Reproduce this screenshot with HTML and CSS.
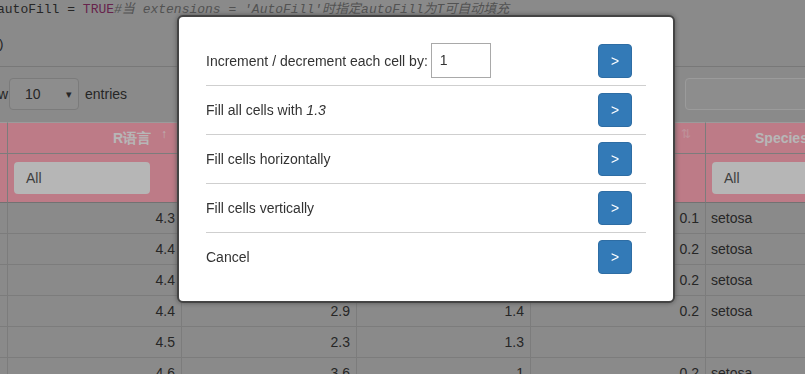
FILE: index.html
```html
<!DOCTYPE html>
<html>
<head>
<meta charset="utf-8">
<link rel="stylesheet" href="styles.css">
</head>
<body>
<div class="page">
  <div class="code-block">
    <pre class="code"><span class="id">autoFill = </span><span class="kw">TRUE</span><span class="cm">#当 extensions = 'AutoFill'时指定autoFill为T可自动填充</span></pre>
    <pre class="code paren">)</pre>
  </div>
  <div class="dt-top">
    <div class="length">
      <span class="show">Show</span>
      <span class="select"><span>10</span><span class="caret">▾</span></span>
      <span class="entries">entries</span>
    </div>
    <div class="search"></div>
  </div>
  <table class="dt">
    <colgroup>
      <col class="c0"><col class="c1"><col class="c2"><col class="c3"><col class="c4"><col class="c5">
    </colgroup>
    <thead>
      <tr class="head">
        <th></th>
        <th class="num">R语言<i class="sort on">↑</i></th>
        <th class="num">Sepal.Width<i class="sort">⇅</i></th>
        <th class="num">Petal.Length<i class="sort">⇅</i></th>
        <th class="num">Petal.Width<i class="sort">⇅</i></th>
        <th class="txt">Species<i class="sort">⇅</i></th>
      </tr>
      <tr class="filter">
        <td></td>
        <td><span class="fin">All</span></td>
        <td><span class="fin">All</span></td>
        <td><span class="fin">All</span></td>
        <td><span class="fin">All</span></td>
        <td><span class="fin">All</span></td>
      </tr>
    </thead>
    <tbody>
      <tr><td></td><td class="num">4.3</td><td class="num">3</td><td class="num">1.1</td><td class="num">0.1</td><td class="txt">setosa</td></tr>
      <tr><td></td><td class="num">4.4</td><td class="num">2.9</td><td class="num">1.4</td><td class="num">0.2</td><td class="txt">setosa</td></tr>
      <tr><td></td><td class="num">4.4</td><td class="num">3</td><td class="num">1.3</td><td class="num">0.2</td><td class="txt">setosa</td></tr>
      <tr><td></td><td class="num">4.4</td><td class="num">2.9</td><td class="num">1.4</td><td class="num">0.2</td><td class="txt">setosa</td></tr>
      <tr><td></td><td class="num">4.5</td><td class="num">2.3</td><td class="num">1.3</td><td class="num"></td><td class="txt"></td></tr>
      <tr><td></td><td class="num">4.6</td><td class="num">3.6</td><td class="num">1</td><td class="num">0.2</td><td class="txt">setosa</td></tr>
    </tbody>
  </table>
</div>
<div class="backdrop"></div>
<div class="af-list">
  <ul>
    <li><div class="q">Increment / decrement each cell by: <span class="inc">1</span></div><div class="b"><button>&gt;</button></div></li>
    <li><div class="q">Fill all cells with <i>1.3</i></div><div class="b"><button>&gt;</button></div></li>
    <li><div class="q">Fill cells horizontally</div><div class="b"><button>&gt;</button></div></li>
    <li><div class="q">Fill cells vertically</div><div class="b"><button>&gt;</button></div></li>
    <li><div class="q">Cancel</div><div class="b"><button>&gt;</button></div></li>
  </ul>
</div>
</body>
</html>
```

FILE: styles.css
```css
html, body {
  margin: 0;
  padding: 0;
}
body {
  width: 805px;
  height: 374px;
  overflow: hidden;
  background: #b9b9b9;
  font-family: "Liberation Sans", Arial, sans-serif;
  font-size: 14px;
  color: #333;
}

.code-block {
  border-bottom: 1px solid #a0a0a0;
  padding-bottom: 11px;
}
.code {
  margin: 0 0 0 -3px;
  font: 13px/20px "Liberation Mono", "Noto Sans CJK SC", monospace;
  color: #333;
  white-space: pre;
}
.code .kw { color: #8a2f66; }
.code .cm { color: #6e6e6e; font-style: italic; }
.paren { margin-top: 15px; }

.dt-top {
  margin-top: 11px;
  height: 32px;
  display: flex;
  align-items: center;
  justify-content: space-between;
}
.length {
  display: flex;
  align-items: center;
  margin-left: -27px;
}
.select {
  margin-left: 1px;
  box-sizing: border-box;
  width: 70px;
  height: 32px;
  border: 1px solid #a4a4a4;
  border-radius: 4px;
  display: flex;
  align-items: center;
  justify-content: space-between;
  padding: 0 6px 0 15px;
  background: #bcbcbc;
}
.caret { font-size: 11px; }
.entries { margin-left: 6px; }
.search {
  box-sizing: border-box;
  width: 140px;
  height: 32px;
  margin-right: -20px;
  border: 1px solid #cfcfcf;
  border-radius: 4px;
  background: #bdbdbd;
}

.dt {
  margin-top: 12px;
  border-collapse: separate;
  border-spacing: 0;
  table-layout: fixed;
  width: 908px;
}
.c0 { width: 8px; }
.c1 { width: 174px; }
.c2 { width: 175px; }
.c3 { width: 174px; }
.c4 { width: 175px; }
.c5 { width: 202px; }

.dt th, .dt td {
  box-sizing: border-box;
  padding: 0;
  border-right: 1px solid #a6a6a6;
  border-bottom: 1px solid #a6a6a6;
  white-space: nowrap;
  overflow: hidden;
}
.dt thead tr.head th {
  border-top: 1px solid #cfcfcf;
  height: 32px;
  line-height: 30px;
  background: #fca4b4;
  color: #f4f4f4;
  font-weight: bold;
  position: relative;
}
.dt thead th.num { text-align: right; padding-right: 30px; }
.dt thead th.txt { text-align: left; padding-left: 49px; }
.sort {
  position: absolute;
  right: 14px;
  top: 0;
  line-height: 22px;
  font-style: normal;
  font-weight: normal;
  font-size: 12px;
  color: #fff;
  opacity: 0.35;
}
.sort.on { opacity: 0.8; }

.dt tr.filter td {
  height: 49px;
  background: #fca4b4;
  vertical-align: middle;
  border-bottom-color: #999;
}
.fin {
  display: block;
  box-sizing: border-box;
  width: 136px;
  height: 32px;
  margin-left: 6px;
  padding-left: 12px;
  line-height: 32px;
  border-radius: 4px;
  background: #f3f3f3;
  color: #555;
}

.dt tbody td {
  height: 31px;
  line-height: 30px;
}
.dt tbody td.num { text-align: right; padding-right: 6px; }
.dt tbody td.txt { text-align: left; padding-left: 5px; }

.backdrop {
  position: fixed;
  inset: 0;
  background: rgba(0, 0, 0, 0.25);
}

.af-list {
  position: fixed;
  left: 177px;
  top: 15px;
  width: 498px;
  box-sizing: border-box;
  background: #fff;
  border: 2px solid #444;
  border-radius: 6px;
  box-shadow: 0 0 5px #555;
  padding: 19px 27px 20px;
}
.af-list ul {
  list-style: none;
  margin: 0;
  padding: 0;
}
.af-list li {
  display: flex;
  align-items: center;
  justify-content: space-between;
  height: 49px;
  box-sizing: border-box;
  border-top: 1px solid #cfcfcf;
}
.af-list li:first-child {
  border-top: none;
}
.q {
  display: flex;
  align-items: center;
  white-space: pre;
}
.inc {
  display: inline-block;
  box-sizing: border-box;
  width: 60px;
  height: 35px;
  line-height: 33px;
  margin-left: -1px;
  padding-left: 8px;
  border: 1px solid #a9a9a9;
}
.b { padding-right: 14px; }
.b button {
  width: 34px;
  height: 34px;
  padding: 0;
  border: 1px solid #2e6da4;
  border-radius: 4px;
  background: #337ab7;
  color: #fff;
  font-family: "Liberation Sans", Arial, sans-serif;
  font-size: 14px;
}
```
